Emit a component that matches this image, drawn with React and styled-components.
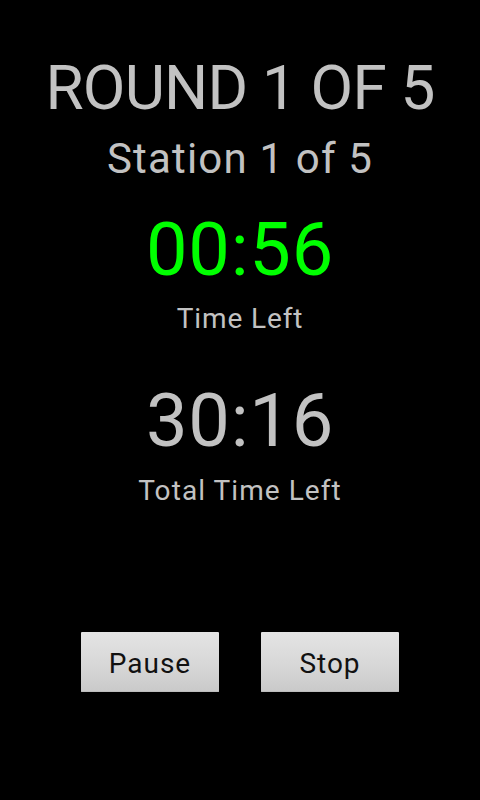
import React from "react";
import styled, { createGlobalStyle } from "styled-components";

const Global = createGlobalStyle`
  html, body { margin: 0; padding: 0; background: #000; }
  body { font-family: Roboto, "Noto Sans", sans-serif; }
`;

const Screen = styled.div`
  width: 480px;
  height: 800px;
  background: #000;
  display: flex;
  flex-direction: column;
  align-items: center;
  padding-top: 57px;
  box-sizing: border-box;
`;

const Label = styled.div`
  font-size: ${(p) => p.$size}px;
  line-height: 1;
  letter-spacing: ${(p) => p.$track || 0}em;
  color: ${(p) => p.$color || "#c2c2c2"};
  margin-top: ${(p) => p.$gap || 0}px;
  white-space: nowrap;
`;

const ButtonRow = styled.div`
  display: flex;
  gap: 42px;
  margin-top: 127px;
`;

const Button = styled.button`
  width: 138px;
  height: 60px;
  border: none;
  border-radius: 1px;
  background: linear-gradient(to bottom, #e4e4e4 0%, #d6d6d6 60%, #c9c9c9 100%);
  box-shadow: inset 0 -1px 0 #bdbdbd;
  font-family: Roboto, "Noto Sans", sans-serif;
  font-size: 28px;
  letter-spacing: 0.035em;
  color: #111;
  padding: 3px 0 0;
  box-sizing: border-box;
  display: flex;
  align-items: center;
  justify-content: center;
`;

export default function App() {
  return (
    <>
      <Global />
      <Screen>
        <Label $size={62} $track={-0.013}>ROUND 1 OF 5</Label>
        <Label $size={42} $gap={19} $track={0.028}>Station 1 of 5</Label>
        <Label $size={74} $gap={33} $color="#00ff00" $track={0.01}>00:56</Label>
        <Label $size={28} $gap={18} $track={0.032}>Time Left</Label>
        <Label $size={74} $gap={51} $track={0.01}>30:16</Label>
        <Label $size={28} $gap={19} $track={0.038}>Total Time Left</Label>
        <ButtonRow>
          <Button>Pause</Button>
          <Button>Stop</Button>
        </ButtonRow>
      </Screen>
    </>
  );
}
